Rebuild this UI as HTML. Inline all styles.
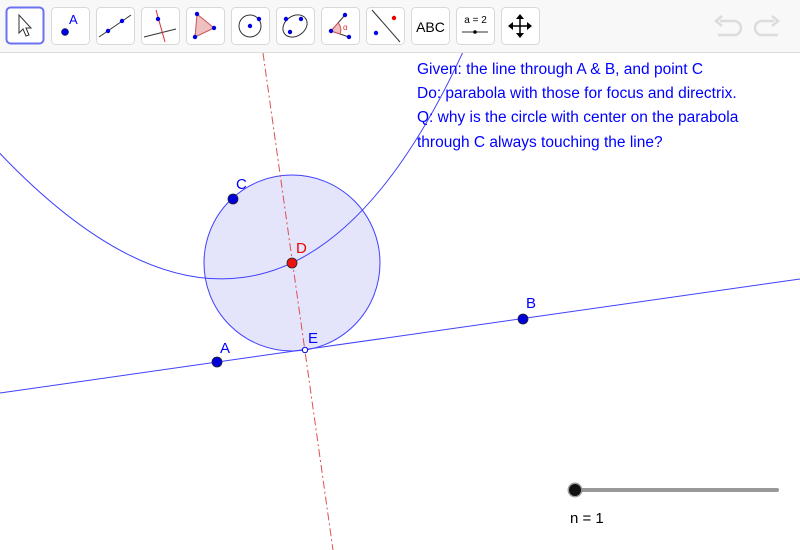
<!DOCTYPE html>
<html><head><meta charset="utf-8"><style>
html,body{margin:0;padding:0;width:800px;height:550px;overflow:hidden;background:#fff;font-family:"Liberation Sans",sans-serif}
</style></head><body>
<svg width="800" height="550" xmlns="http://www.w3.org/2000/svg" style="position:absolute;left:0;top:0">
<defs><clipPath id="cv"><rect x="0" y="53" width="800" height="497"/></clipPath></defs>
<rect x="0" y="0" width="800" height="52" fill="#f8f8f8"/>
<line x1="0" y1="52.5" x2="800" y2="52.5" stroke="#dcdcdc"/>
<g fill="#fff" stroke="#d8d8d8">
<rect x="51.5" y="7.5" width="38" height="37" rx="4"/>
<rect x="96.5" y="7.5" width="38" height="37" rx="4"/>
<rect x="141.5" y="7.5" width="38" height="37" rx="4"/>
<rect x="186.5" y="7.5" width="38" height="37" rx="4"/>
<rect x="231.5" y="7.5" width="38" height="37" rx="4"/>
<rect x="276.5" y="7.5" width="38" height="37" rx="4"/>
<rect x="321.5" y="7.5" width="38" height="37" rx="4"/>
<rect x="366.5" y="7.5" width="38" height="37" rx="4"/>
<rect x="411.5" y="7.5" width="38" height="37" rx="4"/>
<rect x="456.5" y="7.5" width="38" height="37" rx="4"/>
<rect x="501.5" y="7.5" width="38" height="37" rx="4"/>
</g>
<rect x="6.5" y="7.5" width="37" height="36" rx="4" fill="#fff" stroke="#6b72f0" stroke-width="2"/>
<path d="M19 15 L19 33 L23 29 L26 36 L29 35 L26 28 L31 28 Z" fill="#fff" stroke="#333" stroke-width="1"/>
<circle cx="65" cy="32" r="3.5" fill="#0000e0" stroke="#000" stroke-width=".5"/>
<text x="69" y="24" fill="#0000ff" font-size="13">A</text>
<line x1="99" y1="37" x2="131" y2="15" stroke="#333"/>
<circle cx="108" cy="31" r="2.2" fill="#0000e0"/><circle cx="122" cy="21" r="2.2" fill="#0000e0"/>
<line x1="144" y1="37" x2="176" y2="29" stroke="#333"/>
<line x1="156" y1="10" x2="165" y2="42" stroke="#e03030"/>
<circle cx="158" cy="19" r="2.2" fill="#0000e0"/>
<path d="M197 14 L214 28 L195 37 Z" fill="#f0c0c0" stroke="#c55"/>
<circle cx="197" cy="14" r="2.2" fill="#0000e0"/><circle cx="214" cy="28" r="2.2" fill="#0000e0"/><circle cx="195" cy="37" r="2.2" fill="#0000e0"/>
<circle cx="250" cy="26" r="11" fill="none" stroke="#333"/>
<circle cx="250" cy="26" r="2.2" fill="#0000e0"/><circle cx="259" cy="19" r="2.2" fill="#0000e0"/>
<ellipse cx="295" cy="26" rx="13" ry="10" transform="rotate(-35 295 26)" fill="none" stroke="#333"/>
<circle cx="286" cy="19" r="2.2" fill="#0000e0"/><circle cx="301" cy="19" r="2.2" fill="#0000e0"/><circle cx="290" cy="32" r="2.2" fill="#0000e0"/>
<path d="M331 31 L345 15 M331 31 L349 37" stroke="#333" fill="none"/>
<path d="M331 31 L338 23 A10 10 0 0 1 340 34 Z" fill="#f0c0c0" stroke="#c55"/>
<circle cx="345" cy="15" r="2.2" fill="#0000e0"/><circle cx="331" cy="31" r="2.2" fill="#0000e0"/><circle cx="349" cy="37" r="2.2" fill="#0000e0"/>
<text x="343" y="30" fill="#e03030" font-size="8">α</text>
<line x1="372" y1="10" x2="400" y2="42" stroke="#333"/>
<circle cx="394" cy="18" r="2.2" fill="#e00"/><circle cx="376" cy="33" r="2.2" fill="#0000e0"/>
<text x="430.5" y="32" font-size="14" text-anchor="middle" fill="#000">ABC</text>
<text x="475.5" y="23" font-size="10" text-anchor="middle" fill="#000">a = 2</text>
<line x1="462" y1="32" x2="488" y2="32" stroke="#333"/><circle cx="475" cy="32" r="1.8" fill="#000"/>
<g stroke="#000" stroke-width="1.5" fill="#000">
<line x1="520" y1="17" x2="520" y2="35"/><line x1="511" y1="26" x2="529" y2="26"/>
</g>
<path d="M520 14 L516 19 L524 19 Z M520 38 L516 33 L524 33 Z M508 26 L513 22 L513 30 Z M532 26 L527 22 L527 30 Z" fill="#000"/>
<path d="M720 21 L734 21 A7 7 0 0 1 734 35 L718 35 M722 16 L716 21 L722 26" fill="none" stroke="#dcdcdc" stroke-width="2.5"/>
<path d="M774 21 L762 21 A7 7 0 0 0 762 35 L778 35 M772 16 L778 21 L772 26" fill="none" stroke="#dcdcdc" stroke-width="2.5"/>

<g clip-path="url(#cv)">
<circle cx="292" cy="263" r="88" fill="#e4e4fb" stroke="#4040ff" stroke-width="1"/>
<line x1="263" y1="53" x2="333" y2="550" stroke="#e05050" stroke-width="1" stroke-dasharray="8,3,2,3"/>
<path d="M-400 499 Q0 -499 400 499" fill="none" stroke="#4040ff" stroke-width="1" transform="matrix(0.990 -0.1411 -0.1411 -0.990 244.3 277.3)"/>
<line x1="0" y1="393" x2="800" y2="279" stroke="#4040ff" stroke-width="1"/>
</g>
<circle cx="233" cy="199" r="5" fill="#0000dd" stroke="#222" stroke-width=".8"/>
<circle cx="292" cy="263" r="5" fill="#ee1111" stroke="#222" stroke-width=".8"/>
<circle cx="217" cy="362" r="5" fill="#0000dd" stroke="#222" stroke-width=".8"/>
<circle cx="523" cy="319" r="5" fill="#0000dd" stroke="#222" stroke-width=".8"/>
<circle cx="305" cy="350" r="2.7" fill="#fff" stroke="#0000dd" stroke-width="1"/>
<g font-size="15" fill="#0000ff">
<text x="236" y="189">C</text>
<text x="296" y="253" fill="#ee0000">D</text>
<text x="220" y="353">A</text>
<text x="526" y="308">B</text>
<text x="308" y="343">E</text>
</g>
<g font-size="15.5" fill="#0000ff">
<text x="417" y="74">Given: the line through A &amp; B, and point C</text>
<text x="417" y="98">Do: parabola with those for focus and directrix.</text>
<text x="417" y="122">Q: why is the circle with center on the parabola</text>
<text x="417" y="147">through C always touching the line?</text>
</g>
<line x1="575" y1="490" x2="777" y2="490" stroke="#999" stroke-width="4" stroke-linecap="round"/>
<circle cx="575" cy="490" r="7.5" fill="#888" opacity=".8"/>
<circle cx="575" cy="490" r="6" fill="#111"/>
<text x="570" y="523" font-size="15" fill="#000">n = 1</text>
</svg>
</body></html>
